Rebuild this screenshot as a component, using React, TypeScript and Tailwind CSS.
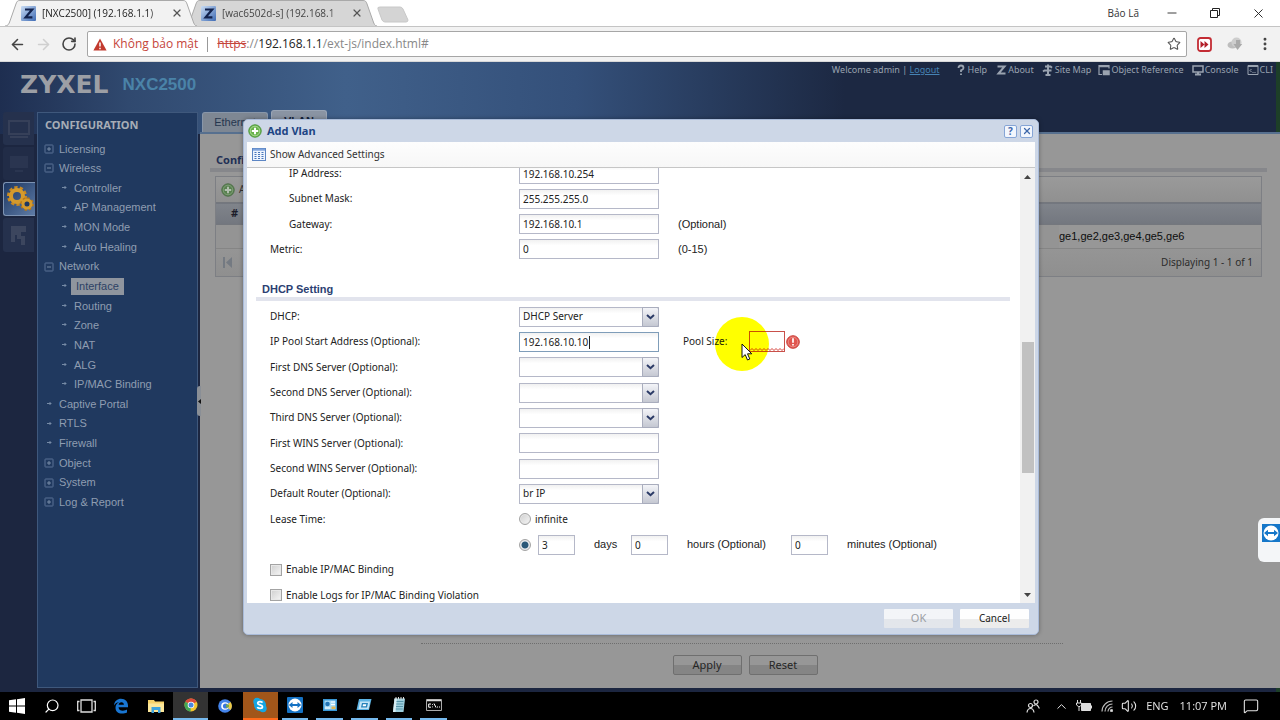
import { ReactNode } from 'react';
import { ArrowLeft, ArrowRight, RotateCw, Star, MoreVertical, X, Minus, Search, ChevronUp, Volume2, MessageSquare } from 'lucide-react';
import clsx from 'clsx';

const tree = [
  { label: 'Licensing', level: 0, mark: 'plus' },
  { label: 'Wireless', level: 0, mark: 'minus' },
  { label: 'Controller', level: 1, mark: 'leaf' },
  { label: 'AP Management', level: 1, mark: 'leaf' },
  { label: 'MON Mode', level: 1, mark: 'leaf' },
  { label: 'Auto Healing', level: 1, mark: 'leaf' },
  { label: 'Network', level: 0, mark: 'minus' },
  { label: 'Interface', level: 1, mark: 'leaf', active: true },
  { label: 'Routing', level: 1, mark: 'leaf' },
  { label: 'Zone', level: 1, mark: 'leaf' },
  { label: 'NAT', level: 1, mark: 'leaf' },
  { label: 'ALG', level: 1, mark: 'leaf' },
  { label: 'IP/MAC Binding', level: 1, mark: 'leaf' },
  { label: 'Captive Portal', level: 0, mark: 'leaf' },
  { label: 'RTLS', level: 0, mark: 'leaf' },
  { label: 'Firewall', level: 0, mark: 'leaf' },
  { label: 'Object', level: 0, mark: 'plus' },
  { label: 'System', level: 0, mark: 'plus' },
  { label: 'Log & Report', level: 0, mark: 'plus' },
];

const TreeMark = ({ mark }: { mark: string }) => (
  <svg width="10" height="10" viewBox="0 0 10 10" fill="none" stroke="#7f93ad" className="shrink-0">
    {mark === 'leaf' ? (
      <path d="M3 4.5h4M5.500 3L7 4.500L5.500 6" strokeWidth=".9" />
    ) : (
      <>
        <rect x="1" y="1" width="8" height="8" rx=".5" stroke="#5a7397" />
        <path d={mark === 'plus' ? 'M3 5h4M5 3v4' : 'M3 5h4'} strokeWidth=".9" />
      </>
    )}
  </svg>
);

const AddIcon = ({ dim }: { dim?: boolean }) => (
  <svg width="14" height="14" viewBox="0 0 14 14" className={clsx('shrink-0', dim && 'opacity-80')}>
    <circle cx="7" cy="7" r="6.2" fill={dim ? '#4a7d3f' : '#69b34c'} stroke={dim ? '#3b6434' : '#4b9637'} />
    <circle cx="7" cy="7" r="4.8" fill="none" stroke={dim ? '#85a87c' : '#b9dfa6'} strokeWidth=".8" />
    <path d="M7 3.8v6.4M3.8 7h6.4" stroke={dim ? '#b9c9b5' : '#fff'} strokeWidth="2" />
  </svg>
);

const ZIcon = () => (
  <svg width="15" height="15" viewBox="0 0 15 15" className="shrink-0">
    <defs>
      <linearGradient id="zfav" x1="0" y1="0" x2="1" y2="1">
        <stop offset="0" stopColor="#c9dcf4" />
        <stop offset="1" stopColor="#3f6cb5" />
      </linearGradient>
    </defs>
    <rect width="15" height="15" rx="1" fill="url(#zfav)" />
    <path d="M4 3.5h7.2L4.6 11.3H11.4" fill="none" stroke="#12224d" strokeWidth="2.2" />
  </svg>
);

const BrowserTab = ({ title, active }: { title: string; active?: boolean }) => (
  <div className={clsx('relative flex h-[26px] w-[192px] items-center', active ? 'z-10' : '-ml-[12px]')}>
    <svg className="absolute inset-0 h-full w-full" viewBox="0 0 193 26" preserveAspectRatio="none">
      <path
        d="M0 26C3 26 4 24 5 21L11 4C12 1 13 .5 15 .5H179C181 .5 182 1 183 4L189 21C190 24 191 26 193 26"
        fill={active ? '#f2f2f2' : '#d6d6d6'}
        stroke="#a9a9a9"
      />
    </svg>
    <div className="relative flex w-full items-center pl-[16px] pr-[14px]">
      <ZIcon />
      <span
        className={clsx(
          'ml-[6px] w-[120px] overflow-hidden whitespace-nowrap text-[10px] [mask-image:linear-gradient(to_right,#000_90%,transparent)]',
          active ? 'text-[#222]' : 'text-[#444]'
        )}
      >
        {title}
      </span>
      <button aria-label="Close tab" className="ml-auto text-[#555]">
        <X size={12} strokeWidth={2.4} />
      </button>
    </div>
  </div>
);

const BrowserBar = () => (
  <header className="shrink-0 bg-white font-['Open_Sans',sans-serif]">
    <div className="flex h-[27px] items-start border-b border-[#c4c4c4] pl-[5px]">
      <BrowserTab title="[NXC2500] (192.168.1.1)" active />
      <BrowserTab title="[wac6502d-s] (192.168.1" />
      <button aria-label="New tab" className="mt-[6px]">
        <svg width="32" height="17" viewBox="0 0 32 17">
          <path d="M1 3Q0 1 3 1H23Q25 1 26 3L31 14Q31 16 29 16H8Q6 16 5 14Z" fill="#d4d4d4" stroke="#c8c8c8" />
        </svg>
      </button>
      <div className="ml-auto flex h-[26px] items-center pr-[14px] text-[#222]">
        <span className="mr-[26px] text-[10px] text-[#333]">Bảo Lã</span>
        <button aria-label="Minimize" className="mr-[30px]"><Minus size={14} strokeWidth={1.5} /></button>
        <button aria-label="Restore" className="mr-[30px]">
          <svg width="12" height="12" viewBox="0 0 12 12" fill="none" stroke="#222">
            <path d="M1.5 3.5h7v7h-7zM3.5 3.5v-2h7v7h-2" />
          </svg>
        </button>
        <button aria-label="Close"><X size={15} strokeWidth={1.5} /></button>
      </div>
    </div>
    <div className="flex h-[35px] items-center border-b border-[#d8d8d8] bg-[#f2f2f2] pl-[9px] pr-[7px]">
      <button aria-label="Back" className="text-[#444]"><ArrowLeft size={17} strokeWidth={2.2} /></button>
      <button aria-label="Forward" className="ml-[9px] text-[#cfcfcf]"><ArrowRight size={17} strokeWidth={2.2} /></button>
      <button aria-label="Reload" className="ml-[9px] text-[#444]"><RotateCw size={16} strokeWidth={2.4} /></button>
      <div className="ml-[10px] flex h-[26px] flex-1 items-center whitespace-nowrap rounded-[2px] border border-[#a6a6a6] bg-white pl-[5px] pr-[5px] text-[12px]">
        <svg width="14" height="13" viewBox="0 0 14 13" className="shrink-0">
          <path d="M7 .5L13.6 12.5H.4Z" fill="#c23a2e" />
          <path d="M7 4.5v4M7 9.7v1.5" stroke="#fff" strokeWidth="1.5" />
        </svg>
        <span className="ml-[6px] text-[#c5453b]">Không bảo mật</span>
        <span className="mx-[9px] h-[15px] w-px bg-[#999]" />
        <span className="text-[#888]">
          <span className="text-[#c5453b] line-through">https</span>://
          <span className="text-[#222]">192.168.1.1</span>/ext-js/index.html#
        </span>
        <button aria-label="Bookmark" className="ml-auto text-[#555]"><Star size={14} strokeWidth={1.8} /></button>
      </div>
      <button aria-label="Skip extension" className="ml-[10px]">
        <svg width="15" height="15" viewBox="0 0 15 15">
          <rect x="1" y="1" width="13" height="13" rx="2.5" fill="#fff" stroke="#c32c34" strokeWidth="1.8" />
          <path d="M3.5 4L7.5 7.5L3.5 11zM7.5 4L11.5 7.5L7.5 11z" fill="#b3202a" />
        </svg>
      </button>
      <button aria-label="Download extension" className="ml-[15px]">
        <svg width="16" height="16" viewBox="0 0 16 16">
          <ellipse cx="5.5" cy="9" rx="5" ry="3.6" fill="#bdbdbd" />
          <circle cx="9.5" cy="6.5" r="5" fill="#cdcdcd" />
          <path d="M9 4h4v4h2.200L10.500 14L6.500 8H9z" fill="#a9a9a9" />
        </svg>
      </button>
      <button aria-label="Menu" className="ml-[14px] text-[#444]"><MoreVertical size={16} strokeWidth={2.4} /></button>
    </div>
  </header>
);

const HeaderLink = ({ icon, children, className }: { icon: ReactNode; children: string; className?: string }) => (
  <a href="#" className={clsx('flex items-center gap-px', className)}>
    <svg width="12" height="12" viewBox="0 0 12 12" fill="none" stroke="#9aa3b0" strokeWidth="1.5" className="shrink-0">
      {icon}
    </svg>
    {children}
  </a>
);

const PageHeader = () => (
  <div className="relative flex h-[48px] shrink-0 justify-between">
    <div className="flex items-center pb-[4px] pl-[20px] leading-none">
      <span className="font-['DejaVu_Sans',sans-serif] text-[25px] font-bold text-[#9c9fa5]">ZYXEL</span>
      <span className="ml-[14px] font-['Liberation_Sans',sans-serif] text-[17px] font-bold text-[#4a83a8]">NXC2500</span>
    </div>
    <div className="flex h-[16px] items-center whitespace-nowrap pr-[7px] text-[9px] text-[#9aa3b0]">
      <span>Welcome admin |&nbsp;</span>
      <a href="#" className="text-[#4683b4] underline">Logout</a>
      <HeaderLink className="ml-[15px]" icon={<path d="M3.5 4Q3.5 1.5 6 1.5T8.5 4Q8.5 5.3 6 6.3V8M6 9.5V11" strokeWidth="1.8" />}>Help</HeaderLink>
      <HeaderLink className="ml-[8px]" icon={<path d="M2.5 2.5h7L3.5 9.5h7" strokeWidth="2" />}>About</HeaderLink>
      <HeaderLink className="ml-[8px]" icon={<path d="M6 .5v11M3 2.500h5.500l1.500 1.200M9.500 6.500h-7L1 7.500M3.500 11h5" strokeWidth="2" />}>Site Map</HeaderLink>
      <HeaderLink className="ml-[7px]" icon={<><path d="M4 10.500H1v-9h10v3" strokeWidth="1.200" /><path d="M5.500 7h5.500v3.500H5.500z" fill="#9aa3b0" /><path d="M1 2.500h10" /></>}>Object Reference</HeaderLink>
      <HeaderLink className="ml-[8px]" icon={<><path d="M1 2h10v6H1z" /><path d="M3 10.5h6M6 8v2" strokeWidth="2" /></>}>Console</HeaderLink>
      <HeaderLink className="ml-[8px]" icon={<><path d="M1 1.5h10v9H1z" strokeWidth="1" /><path d="M1 2.5h10M4.5 5L3 6.5L4.5 8M5.5 8.5h1M7.5 8.5h1" strokeWidth="1" /></>}>CLI</HeaderLink>
    </div>
  </div>
);

const Rail = () => (
  <aside className="flex w-[37px] shrink-0 flex-col gap-[2px] pl-[3px] pt-[2px]">
    <button aria-label="Monitor" className="flex h-[33px] w-[31px] items-center justify-center rounded-l-[3px] bg-[#25314d]">
      <svg width="24" height="24" viewBox="0 0 24 24" fill="none" stroke="#364059" strokeWidth="2"><path d="M2 4h20v13H2zM3 20h18" /></svg>
    </button>
    <button aria-label="Dashboard" className="flex h-[33px] w-[31px] items-center justify-center rounded-l-[3px] bg-[#212c47]">
      <svg width="22" height="24" viewBox="0 0 22 24" fill="#2a3550"><path d="M2 4h18v12H2zM7 18h8v2H7z" /></svg>
    </button>
    <button aria-label="Configuration" className="flex h-[34px] w-[32px] items-center justify-center rounded-l-[3px] border border-r-0 border-[#7d93b3] bg-gradient-to-br from-[#1d3763] to-[#5f7ca6]">
      <svg width="28" height="28" viewBox="0 0 28 28">
        <circle cx="11" cy="11" r="8" fill="none" stroke="#c98920" strokeWidth="4" strokeDasharray="3 2" />
        <circle cx="11" cy="11" r="6" fill="none" stroke="#d59a2c" strokeWidth="4" />
        <circle cx="21" cy="19" r="5.3" fill="none" stroke="#b87715" strokeWidth="3" strokeDasharray="2.2 1.9" />
        <circle cx="21" cy="19" r="4" fill="#1d3763" stroke="#d59a2c" strokeWidth="3" />
      </svg>
    </button>
    <button aria-label="Maintenance" className="flex h-[34px] w-[31px] items-center justify-center rounded-l-[3px] bg-[#25314d]">
      <svg width="22" height="24" viewBox="0 0 22 24" fill="#3c465e"><path d="M3 3h15v6h-5v4h4v9h-4v-6H9v-4H7v7H3z" /></svg>
    </button>
  </aside>
);

const Sidebar = () => (
  <nav className="relative mr-[2px] mt-[2px] w-[161px] shrink-0 border border-[#3f587c] bg-[#20395f] pt-[3px] font-['Liberation_Sans',sans-serif] text-[11px] text-[#8f9db1]">
    <h2 className="flex h-[18px] items-center pl-[7px] font-['Noto_Sans',sans-serif] text-[11px] font-bold text-[#a7adb6]">CONFIGURATION</h2>
    <ul className="mt-[5px] grid h-[373px] auto-rows-fr">
      {tree.map((item) => (
        <li key={item.label} className={clsx('flex items-center', item.level ? 'pl-[21px]' : 'pl-[6px]')}>
          <TreeMark mark={item.mark} />
          {item.active ? (
            <a href="#" aria-current="page" className="ml-[2px] bg-[#8f959e] px-[5px] leading-[17px] text-[#2d4265]">{item.label}</a>
          ) : (
            <a href="#" className="ml-[5px]">{item.label}</a>
          )}
        </li>
      ))}
    </ul>
    <button aria-label="Collapse" className="absolute -right-[4px] top-[273px] flex h-[30px] w-[4px] items-center rounded-l-[3px] bg-[#8a8f96]">
      <svg width="4" height="5" viewBox="0 0 4 5"><path d="M4 0L1 2.500L4 5z" fill="#111" /></svg>
    </button>
  </nav>
);

const MainPanel = () => (
  <main className="flex min-w-0 flex-1 flex-col">
    <div className="flex h-[22px] shrink-0 items-end gap-[3px] pl-[2px] font-['Liberation_Sans',sans-serif] text-[11px]">
      <button className="h-[20px] w-[66px] rounded-t-[3px] border border-b-0 border-[#8896a9] bg-[#7e8793] text-[#26364f]">Ethernet</button>
      <button className="h-[22px] w-[56px] rounded-t-[3px] border border-b-0 border-[#9aa5b5] bg-[#8a94a3] font-bold text-[#14233f]">VLAN</button>
    </div>
    <div className="flex flex-1 flex-col border-t-[2px] border-[#57708f] bg-[#979797] pl-[10px] pr-[13px] pt-[18px]">
      <h1 className="pl-[6px] text-[11px] font-bold leading-[16px] text-[#1f2f55]">Configuration</h1>
      <div className="h-[4px] bg-[#86878b]" />
      <div className="ml-[5px] mr-[5px] mt-[4px] border border-[#7d7f84] text-[10px]">
        <div className="flex h-[25px] items-center bg-gradient-to-b from-[#9a9a9a] to-[#909090] pl-[5px]">
          <button className="flex items-center gap-[4px] text-[#333]"><AddIcon dim /> Add</button>
        </div>
        <table className="w-full border-collapse text-left">
          <thead>
            <tr className="h-[22px] border-y border-[#74777d] bg-gradient-to-b from-[#80848b] to-[#73777f]">
              <th className="w-[843px] pl-[15px] text-[11px] text-[#1c1c2a]">#</th>
              <td />
            </tr>
          </thead>
          <tbody>
            <tr className="h-[24px] border-b border-[#858585]">
              <td className="bg-[#949494]" />
              <td className="font-['Liberation_Sans',sans-serif] text-[11px] text-[#0d0d0d]">ge1,ge2,ge3,ge4,ge5,ge6</td>
            </tr>
          </tbody>
        </table>
        <div className="flex h-[27px] items-center justify-between bg-gradient-to-b from-[#959595] to-[#8f8f8f] pl-[6px] pr-[8px]">
          <button aria-label="First page">
            <svg width="11" height="11" viewBox="0 0 11 11" fill="#747a82"><path d="M1 0h2v11H1zM10 0v11L4 5.5z" /></svg>
          </button>
          <span className="text-[#2c2c2c]">Displaying 1 - 1 of 1</span>
        </div>
      </div>
      <div className="ml-[6px] mt-auto flex justify-center gap-[7px] self-center border-t border-dotted border-[#6e6e6e] pb-[13px] pl-[252px] pr-[245px] pt-[11px] text-[11px] text-[#262626]">
        <button className="h-[20px] w-[69px] rounded-[2px] border border-[#6f6f6f] bg-gradient-to-b from-[#979797] from-50% to-[#858585] to-50%">Apply</button>
        <button className="h-[20px] w-[69px] rounded-[2px] border border-[#6f6f6f] bg-gradient-to-b from-[#979797] from-50% to-[#858585] to-50%">Reset</button>
      </div>
    </div>
  </main>
);

const Field = ({ label, id, indent, children }: { label: string; id: string; indent?: boolean; children: ReactNode }) => (
  <div className="flex items-center">
    <label htmlFor={id} className={clsx('w-[249px] shrink-0', indent && 'pl-[19px]')}>{label}</label>
    {children}
  </div>
);

const TextBox = ({ id, value = '', small, focused }: { id: string; value?: string; small?: boolean; focused?: boolean }) => (
  <input
    id={id}
    defaultValue={value}
    className={clsx(
      'h-[20px] border bg-gradient-to-b from-[#f1f1f1] to-white to-30% px-[3px] text-[10px] outline-none',
      small ? 'w-[37px]' : 'w-[140px]',
      focused ? 'border-[#7f9db9]' : 'border-[#b5b8c8]'
    )}
  />
);

const Combo = ({ id, value = '' }: { id: string; value?: string }) => (
  <div className="relative h-[20px] w-[140px]">
    <select id={id} className="h-full w-full appearance-none border border-[#b5b8c8] bg-gradient-to-b from-[#f1f1f1] to-white to-30% px-[3px] text-[10px] outline-none">
      <option>{value}</option>
    </select>
    <span className="pointer-events-none absolute inset-y-0 right-0 flex w-[17px] items-center justify-center rounded-r-[2px] border border-[#a9adbd] bg-gradient-to-b from-[#f3f4f8] to-[#c5c8d2]">
      <svg width="9" height="6" viewBox="0 0 9 6" fill="none" stroke="#2b3a66" strokeWidth="2"><path d="M1 1L4.5 4.2L8 1" /></svg>
    </span>
  </div>
);

const PoolSize = () => (
  <div className="relative ml-[24px] flex items-center">
    <label htmlFor="pool" className="w-[66px]">Pool Size:</label>
    <input id="pool" className="h-[21px] w-[36px] border border-[#c9504a] bg-transparent outline-none" />
    <svg width="34" height="3" viewBox="0 0 34 3" className="absolute bottom-px left-[67px]">
      <path d="M0 2.5L2 .5L4 2.5L6 .5L8 2.5L10 .5L12 2.5L14 .5L16 2.5L18 .5L20 2.5L22 .5L24 2.5L26 .5L28 2.5L30 .5L32 2.5L34 .5" fill="none" stroke="#d4403a" />
    </svg>
    <svg width="14" height="14" viewBox="0 0 14 14" className="ml-px">
      <circle cx="7" cy="7" r="6.3" fill="#e0564f" stroke="#c9403b" />
      <circle cx="7" cy="7" r="4.8" fill="none" stroke="#f0a09b" strokeWidth=".7" />
      <path d="M7 3.2v4.6M7 9v1.6" stroke="#fff" strokeWidth="1.7" />
    </svg>
    {/* click highlight and pointer */}
    <span className="pointer-events-none absolute left-[32px] top-[-14px] h-[54px] w-[54px] rounded-full bg-[#ffff00] mix-blend-multiply" />
    <svg width="12" height="19" viewBox="0 0 12 19" className="pointer-events-none absolute left-[58px] top-[12px]">
      <path d="M1 1V14.5L4.2 11.6L6.5 17L8.8 16L6.5 10.8H10.8Z" fill="#fff" stroke="#111" />
    </svg>
  </div>
);

const unit = "font-['Liberation_Sans',sans-serif] text-[11px]";
const tick = 'size-[12px] shrink-0 appearance-none border border-[#a3a3a3] bg-gradient-to-br from-[#cfcfcf] to-[#f6f6f6] shadow-[inset_0_0_0_1px_#e8e8e8]';

const VlanDialog = () => (
  <div role="dialog" aria-label="Add Vlan" className="flex h-[516px] w-[796px] max-w-full flex-col rounded-[5px] border border-[#a9bbd9] bg-[#cdd7e7] px-[3px] shadow-[0_0_4px_rgba(0,0,0,.35)]">
    <div className="flex h-[22px] shrink-0 items-center pl-px pr-[2px]">
      <AddIcon />
      <h2 className="ml-[5px] text-[11px] font-bold text-[#1d4584]">Add Vlan</h2>
      <button aria-label="Help" className="ml-auto flex size-[13px] items-center justify-center rounded-[2px] border border-[#86a5d6] bg-[#f2f6fd] text-[10px] font-bold leading-none text-[#3f68ab]">?</button>
      <button aria-label="Close" className="ml-[3px] flex size-[13px] items-center justify-center rounded-[2px] border border-[#86a5d6] bg-[#f2f6fd] text-[#3f68ab]"><X size={10} strokeWidth={3} /></button>
    </div>
    <div className="flex h-[26px] shrink-0 items-center border-b border-[#c6c6c6] bg-gradient-to-b from-[#fdfdfd] to-[#f7f7f7] pl-[5px]">
      <button className="flex items-center gap-[4px] text-[10px] text-[#333]">
        <svg width="14" height="13" viewBox="0 0 14 13">
          <rect x=".5" y=".5" width="13" height="12" fill="#eef4fd" stroke="#5d86c4" />
          <path d="M1 1.7h12" stroke="#7ea3dc" strokeWidth="2" />
          <path d="M2.5 4.5h2M2.5 6.5h2M2.5 8.5h2M2.5 10.5h2M6 4.5h2M6 6.5h2M6 8.5h2M6 10.5h2M9.5 4.5h2M9.5 6.5h2M9.5 8.5h2M9.5 10.5h2" stroke="#4775ba" />
        </svg>
        Show Advanced Settings
      </button>
    </div>
    <div className="flex min-h-0 flex-1 overflow-hidden bg-white">
      <form className="-mt-[7px] min-w-0 flex-1 pl-[9px] pr-[10px] text-[10px] text-[#222]">
        <div className="grid h-[101px] auto-rows-fr pl-[14px]">
          <Field label="IP Address:" id="ip" indent><TextBox id="ip" value="192.168.10.254" /></Field>
          <Field label="Subnet Mask:" id="mask" indent><TextBox id="mask" value="255.255.255.0" /></Field>
          <Field label="Gateway:" id="gw" indent>
            <TextBox id="gw" value="192.168.10.1" />
            <span className={clsx(unit, 'ml-[19px]')}>(Optional)</span>
          </Field>
          <Field label="Metric:" id="metric">
            <TextBox id="metric" value="0" />
            <span className={clsx(unit, 'ml-[19px]')}>(0-15)</span>
          </Field>
        </div>
        <div className="flex h-[42px] flex-col justify-end pb-[3px]">
          <h3 className="pl-[6px] font-['Liberation_Sans',sans-serif] text-[11px] font-bold leading-[16px] text-[#2c3f72]">DHCP Setting</h3>
          <div className="h-[4px] bg-[#e2e4ed]" />
        </div>
        <div className="grid h-[304px] auto-rows-fr pl-[14px]">
          <Field label="DHCP:" id="dhcp"><Combo id="dhcp" value="DHCP Server" /></Field>
          <Field label="IP Pool Start Address (Optional):" id="start">
            <div className="relative flex">
              <TextBox id="start" value="192.168.10.10" focused />
              <span className="absolute left-[70px] top-[4px] h-[13px] w-px bg-[#222]" />
            </div>
            <PoolSize />
          </Field>
          <Field label="First DNS Server (Optional):" id="dns1"><Combo id="dns1" /></Field>
          <Field label="Second DNS Server (Optional):" id="dns2"><Combo id="dns2" /></Field>
          <Field label="Third DNS Server (Optional):" id="dns3"><Combo id="dns3" /></Field>
          <Field label="First WINS Server (Optional):" id="wins1"><TextBox id="wins1" /></Field>
          <Field label="Second WINS Server (Optional):" id="wins2"><TextBox id="wins2" /></Field>
          <Field label="Default Router (Optional):" id="router"><Combo id="router" value="br IP" /></Field>
          <Field label="Lease Time:" id="infinite">
            <input type="radio" name="lease" id="infinite" className={clsx(tick, 'rounded-full')} />
            <label htmlFor="infinite" className="ml-[4px]">infinite</label>
          </Field>
          <div className="flex items-center whitespace-nowrap pl-[249px]">
            <input type="radio" name="lease" aria-label="Limited lease" defaultChecked className={clsx(tick, 'mr-[7px] rounded-full checked:bg-[radial-gradient(circle,#2a5878_0_3px,#e9eef2_4px)]')} />
            <TextBox id="days" value="3" small />
            <label htmlFor="days" className={clsx(unit, 'ml-[19px] w-[37px]')}>days</label>
            <TextBox id="hours" value="0" small />
            <label htmlFor="hours" className={clsx(unit, 'ml-[19px] w-[104px]')}>hours (Optional)</label>
            <TextBox id="minutes" value="0" small />
            <label htmlFor="minutes" className={clsx(unit, 'ml-[19px]')}>minutes (Optional)</label>
          </div>
          <div className="flex items-center gap-[4px]">
            <input type="checkbox" id="bind" className={tick} />
            <label htmlFor="bind">Enable IP/MAC Binding</label>
          </div>
          <div className="flex items-center gap-[4px]">
            <input type="checkbox" id="logs" className={tick} />
            <label htmlFor="logs">Enable Logs for IP/MAC Binding Violation</label>
          </div>
        </div>
      </form>
      <div className="flex w-[15px] shrink-0 flex-col items-center bg-[#f1f1f1]">
        <svg width="7" height="4" viewBox="0 0 7 4" className="mt-[7px]"><path d="M0 4L3.5 0L7 4z" fill="#444" /></svg>
        <div className="mt-[163px] h-[131px] w-[12px] bg-[#c1c1c1]" />
        <svg width="7" height="4" viewBox="0 0 7 4" className="mb-[6px] mt-auto"><path d="M0 0L3.5 4L7 0z" fill="#444" /></svg>
      </div>
    </div>
    <div className="flex h-[31px] shrink-0 items-center justify-end gap-[7px] pr-[6px] text-[11px]">
      <button disabled className="h-[19px] w-[69px] rounded-[1px] bg-gradient-to-b from-[#f3f5f8] from-50% to-[#e3e6eb] to-50% text-[#9b9ea4]">OK</button>
      <button className="h-[19px] w-[69px] rounded-[1px] bg-gradient-to-b from-[#fefefe] from-50% to-[#ececec] to-50% text-[10px] text-[#222]">Cancel</button>
    </div>
  </div>
);

const Svg = ({ children }: { children: ReactNode }) => (
  <svg width="16" height="16" viewBox="0 0 16 16">{children}</svg>
);

const apps = [
  { name: 'Start', icon: <Svg><path d="M0 2.3L7 1.3V7.5H0zM8 1.2L16 0V7.5H8zM0 8.5H7V14.7L0 13.7zM8 8.5H16V16L8 14.8z" fill="#fff" /></Svg> },
  { name: 'Search', icon: <Search size={16} strokeWidth={1.8} color="#fff" className="-scale-x-100" /> },
  { name: 'Task view', icon: <svg width="19" height="14" viewBox="0 0 19 14" fill="none" stroke="#ddd" strokeWidth="1.3"><path d="M4 1h11v12H4zM2.5 2.5H.7v9h1.8M16.5 2.5h1.8v9h-1.8" /></svg> },
  { name: 'Edge', icon: <Svg><path d="M1 7.5C1.4 3 4.5 .8 8 .8C12.500 .8 15 4 15 7.800V9.200H5.500C5.700 11.600 7.500 12.700 9.800 12.700C11.500 12.700 13 12.200 14 11.600V14.500C12.500 15.300 10.800 15.600 9 15.600C5 15.600 2.500 13.200 2.500 9.700C2.500 7 4 5 6.300 4C4 4.300 2 5.500 1 7.500ZM5.600 6.800H10.900C10.900 5.200 10 4.200 8.400 4.200C6.900 4.200 5.800 5.200 5.600 6.800Z" fill="#1976d2" /></Svg> },
  { name: 'Explorer', icon: <Svg><path d="M0 2h6l1 1.500h9V14H0z" fill="#f7d36b" /><path d="M0 5.500h16V14H0z" fill="#fce79a" /><path d="M3.500 15V9h9v6H10v-3H6v3z" fill="#3fa4de" /></Svg> },
  {
    name: 'Chrome', box: 'bg-[#333] border-b-2 border-[#76b9ed]',
    icon: <Svg><circle cx="8" cy="8" r="6.500" fill="#f4c430" /><path d="M8 8L2.400 4.700A6.500 6.500 0 0 1 13.700 4.800z" fill="#dc4a3d" /><path d="M8 8L2.400 4.700A6.500 6.500 0 0 0 7.500 14.500z" fill="#43a756" /><circle cx="8" cy="8" r="3.300" fill="#fff" /><circle cx="8" cy="8" r="2.500" fill="#4a86e0" /></Svg>,
  },
  { name: 'Browser', icon: <Svg><circle cx="8" cy="8" r="6.800" fill="#4484ea" /><path d="M8 8L13.500 4A6.800 6.800 0 0 1 13.500 12z" fill="#efc941" /><circle cx="8" cy="8" r="3.800" fill="#fff" /><circle cx="8.500" cy="8" r="2.600" fill="#3b77dd" /><path d="M9 6.500h3v3H9z" fill="#74a84b" /></Svg> },
  { name: 'Skype', box: 'bg-[#a1561a] border-b-2 border-[#ff6a1a]', icon: <Svg><circle cx="8" cy="8" r="6" fill="#14a6e2" /><circle cx="5" cy="4.500" r="3.700" fill="#14a6e2" /><circle cx="11" cy="11.500" r="3.700" fill="#14a6e2" /><path d="M10.500 5.600C10 4.200 5.700 4 5.700 6.200C5.700 8.300 10.500 7.300 10.500 9.700C10.500 12 5.800 11.800 5.400 10" fill="none" stroke="#fff" strokeWidth="1.700" /></Svg> },
  { name: 'TeamViewer', box: 'open', icon: <Svg><rect width="16" height="16" rx="1" fill="#1572c4" /><circle cx="8" cy="8" r="6.500" fill="#fff" /><path d="M1.800 8L5.500 5V7H10.500V5L14.200 8L10.500 11V9H5.500V11z" fill="#1572c4" /></Svg> },
  { name: 'Control panel', box: 'open', icon: <Svg><rect x="1" y="2" width="14" height="12" fill="#3a97d4" /><rect x="2.500" y="3.500" width="11" height="9" fill="#a9dbf5" /><circle cx="5.500" cy="7" r="2.300" fill="#2374b5" /><path d="M9 5h4M9 7.500h4M3 11h5" stroke="#fff" strokeWidth="1.200" /><path d="M9.500 9.500h4V12h-4z" fill="#e0b551" /></Svg> },
  { name: 'Run', box: 'open', icon: <Svg><path d="M3 2h12.500L13 13H.500z" fill="#5db4e4" /><path d="M4 4.500h10L12.500 12H2.500z" fill="#c4e5f6" /><path d="M6 6h6l-1 4.500H5z" fill="#2683bb" /><path d="M7 7.300h3.300l-.5 2H6.600z" fill="#fff" /></Svg> },
  { name: 'Notepad', box: 'open', icon: <Svg><path d="M3.500 1.500H14L12.500 15H2z" fill="#9fcfdd" /><path d="M2 15L3.500 1.500H6L4.500 15z" fill="#d8edf3" /><path d="M5.500 4.500h7M5.300 7h7M5 9.500h7M4.800 12h7" stroke="#5796aa" /><path d="M5 0v2.500M7.500 0v2.500M10 0v2.500M12.500 0v2.500" stroke="#ddd" /></Svg> },
  { name: 'Command prompt', box: 'open', icon: <Svg><path d="M.5 2.500h15v11H.500z" fill="#080808" stroke="#aaa" /><path d="M1 3.500h14" stroke="#ddd" strokeWidth="1.500" /><path d="M5 7H2.700v3.200H5M6.500 7.200v.8M6.500 9.500v.8M8 6.500L10 10.500M11 10h1M13 10h1" fill="none" stroke="#fff" /></Svg> },
];

const Taskbar = () => (
  <footer className="flex h-[28px] shrink-0 items-stretch justify-between bg-black font-['Open_Sans',sans-serif]">
    <div className="grid w-[451px] grid-cols-13">
      {apps.map((app) => (
        <button
          key={app.name}
          aria-label={app.name}
          className={clsx('flex items-center justify-center', app.box === 'open' ? 'mx-[4px] border-b-2 border-[#76b9ed]' : app.box)}
        >
          {app.icon}
        </button>
      ))}
    </div>
    <div className="flex items-center pr-[21px] text-[11px] text-[#e4e4e4]">
      <svg width="14" height="14" viewBox="0 0 14 14" fill="none" stroke="#ddd" strokeWidth="1.200">
        <circle cx="4.500" cy="6.500" r="2" /><circle cx="10" cy="3" r="2" /><path d="M1 13.500Q1.500 9.500 4.500 9.500T8 13.500M7.500 7Q8.500 5.600 10 5.600T13.400 9.500" />
      </svg>
      <ChevronUp size={15} strokeWidth={1.600} className="ml-[14px]" />
      <svg width="16" height="12" viewBox="0 0 16 12" className="ml-[7px]" fill="none" stroke="#ddd">
        <path d="M5.500 3.500h9v7h-9z" fill="#ddd" /><path d="M15.500 5.500v3M1.500 0v3M4.500 0v3M.500 3h5v2L4 6.500H2.500L.500 5zM3 6.500V11" />
      </svg>
      <svg width="12" height="12" viewBox="0 0 12 12" className="ml-[9px]" fill="none" stroke="#bbb" strokeWidth="1.200">
        <path d="M1 11.500A10.500 10.500 0 0 1 11.500 1M4 11.500A7.500 7.500 0 0 1 11.500 4M7 11.500A4.500 4.500 0 0 1 11.500 7" /><circle cx="10.500" cy="10.500" r="1" fill="#fff" />
      </svg>
      <Volume2 size={16} strokeWidth={1.600} className="ml-[8px]" />
      <span className="ml-[9px]">ENG</span>
      <span className="ml-[11px]">11:07 PM</span>
      <MessageSquare size={16} strokeWidth={1.600} className="ml-[16px]" />
    </div>
  </footer>
);

export default function App() {
  return (
    <div className="flex min-h-screen flex-col font-['Noto_Sans',sans-serif]">
      <BrowserBar />
      <div className="relative flex flex-1 flex-col bg-[#1c2640] pb-[4px]">
        <div className="absolute inset-x-0 top-0 h-[72px] bg-[linear-gradient(to_right,#1e2e50_0%,#30496f_10%,#40608a_27%,#34507a_45%,#1c2842_66%)]" />
        <div className="absolute inset-y-0 right-0 w-[4px] bg-[#1d3f28]" />
        <PageHeader />
        <div className="relative flex flex-1">
          <Rail />
          <Sidebar />
          <MainPanel />
        </div>
        <div className="absolute inset-0 flex items-center justify-center pl-[2px]">
          <VlanDialog />
        </div>
        <button aria-label="TeamViewer panel" className="absolute right-0 top-[456px] flex h-[44px] w-[22px] items-start rounded-l-[6px] bg-[#f4f6f8] pl-[4px] pt-[6px]">
          <svg width="18" height="18" viewBox="0 0 18 18">
            <rect width="18" height="18" fill="#1577c9" /><circle cx="9" cy="9" r="7.500" fill="#fff" /><path d="M2 9L6 5.800V8H12V5.800L16 9L12 12.200V10H6V12.200z" fill="#1577c9" />
          </svg>
        </button>
      </div>
      <Taskbar />
    </div>
  );
}
